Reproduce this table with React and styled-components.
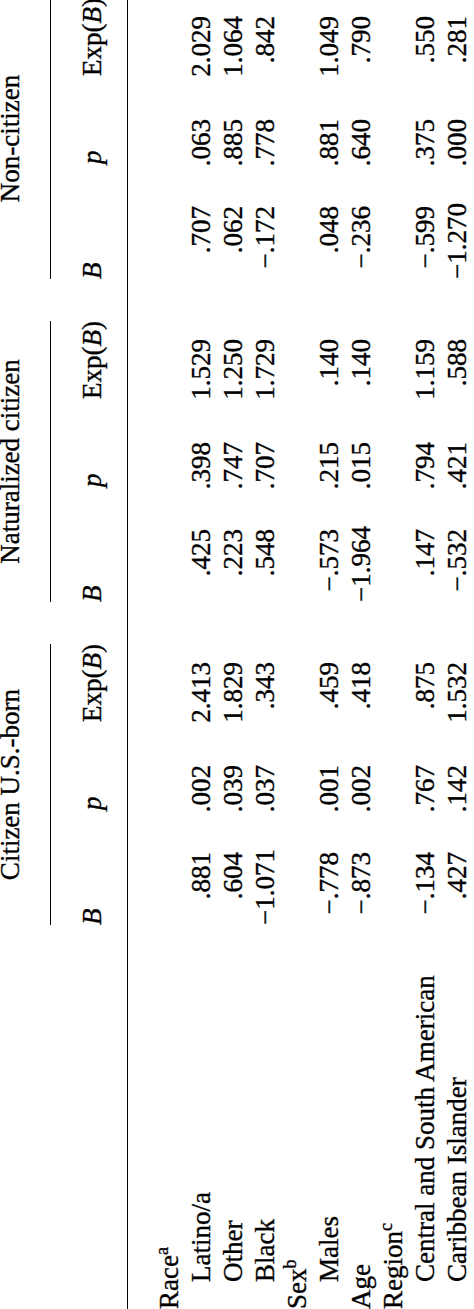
import React from 'react';
import styled, { createGlobalStyle } from 'styled-components';

const GlobalStyle = createGlobalStyle`
  html, body {
    margin: 0;
    padding: 0;
    background: #ffffff;
  }
`;

// the printed table is turned a quarter turn, so it is laid out flat
// (1311 wide) and rotated onto the 474 x 1309 page
const COLS = '384px repeat(2, 73px 87px 121px 42px) 73px 87px 121px';

const groups = ['Citizen U.S.-born', 'Naturalized citizen', 'Non-citizen'];

const rows = [
  { label: 'Race', sup: 'a' },
  { label: 'Latino/a', indent: true, values: ['.881', '.002', '2.413', '.425', '.398', '1.529', '.707', '.063', '2.029'] },
  { label: 'Other', indent: true, values: ['.604', '.039', '1.829', '.223', '.747', '1.250', '.062', '.885', '1.064'] },
  { label: 'Black', indent: true, values: ['\u22121.071', '.037', '.343', '.548', '.707', '1.729', '\u2212.172', '.778', '.842'] },
  { label: 'Sex', sup: 'b' },
  { label: 'Males', indent: true, values: ['\u2212.778', '.001', '.459', '\u2212.573', '.215', '.140', '.048', '.881', '1.049'] },
  { label: 'Age', values: ['\u2212.873', '.002', '.418', '\u22121.964', '.015', '.140', '\u2212.236', '.640', '.790'] },
  { label: 'Region', sup: 'c' },
  { label: 'Central and South American', indent: true, values: ['\u2212.134', '.767', '.875', '.147', '.794', '1.159', '\u2212.599', '.375', '.550'] },
  { label: 'Caribbean Islander', indent: true, values: ['.427', '.142', '1.532', '\u2212.532', '.421', '.588', '\u22121.270', '.000', '.281'] },
];

const colOf = (i) => 2 + Math.floor(i / 3) * 4 + (i % 3);

const App = () => (
  <>
    <GlobalStyle />
    <Page>
      <Sheet>
        <GroupRow>
          {groups.map((g, i) => (
            <GroupTitle key={g} $start={2 + i * 4}>
              {g}
            </GroupTitle>
          ))}
        </GroupRow>
        <HeadRow>
          {groups.map((g, i) => (
            <React.Fragment key={g}>
              <ColHead $col={2 + i * 4} $inset={0}>
                <I>B</I>
              </ColHead>
              <ColHead $col={3 + i * 4} $inset={42}>
                <I>p</I>
              </ColHead>
              <ColHead $col={4 + i * 4} $inset={43}>
                Exp(<I>B</I>)
              </ColHead>
            </React.Fragment>
          ))}
        </HeadRow>
        <Rule />
        {rows.map((r) => (
          <Row key={r.label}>
            <Label $indent={r.indent}>
              {r.label}
              {r.sup && <Sup>{r.sup}</Sup>}
            </Label>
            {r.values &&
              r.values.map((v, i) => (
                <Num key={i} $col={colOf(i)} $pad={i % 3 === 2 ? 18 : 0}>
                  {v}
                </Num>
              ))}
          </Row>
        ))}
      </Sheet>
    </Page>
  </>
);

export default App;

const Page = styled.div`
  width: 474px;
  height: 1309px;
  overflow: hidden;
  background: #ffffff;
`;

const Sheet = styled.div`
  width: 1311px;
  display: flex;
  flex-direction: column;
  transform-origin: 0 0;
  transform: translateY(1309px) rotate(-90deg);
  font-family: 'Liberation Serif', 'Times New Roman', serif;
  font-size: 27px;
  color: #000000;
  -webkit-text-stroke: 0.35px #000000;
`;

const Row = styled.div`
  display: grid;
  grid-template-columns: ${COLS};
  line-height: 32.05px;
  white-space: nowrap;
`;

const GroupRow = styled(Row)`
  margin-top: -6px;
  line-height: 32px;
`;

const GroupTitle = styled.div`
  grid-column: ${(p) => p.$start} / span 3;
  text-align: center;
  padding-bottom: 23.5px;
  border-bottom: 1.5px solid #000000;
`;

const HeadRow = styled(Row)`
  padding-top: 25px;
  padding-bottom: 19.2px;
  line-height: 32px;
`;

const ColHead = styled.div`
  grid-column: ${(p) => p.$col};
  padding-left: ${(p) => p.$inset}px;
`;

const I = styled.i`
  font-style: italic;
`;

const Rule = styled.div`
  height: 1.5px;
  background: #000000;
  margin-bottom: 24.5px;
`;

const Label = styled.div`
  grid-column: 1;
  padding-left: ${(p) => (p.$indent ? '27px' : '0')};
`;

const Sup = styled.span`
  font-size: 18px;
  line-height: 0;
  vertical-align: 10px;
`;

const Num = styled.div`
  grid-column: ${(p) => p.$col};
  text-align: right;
  padding-right: ${(p) => p.$pad}px;
`;
